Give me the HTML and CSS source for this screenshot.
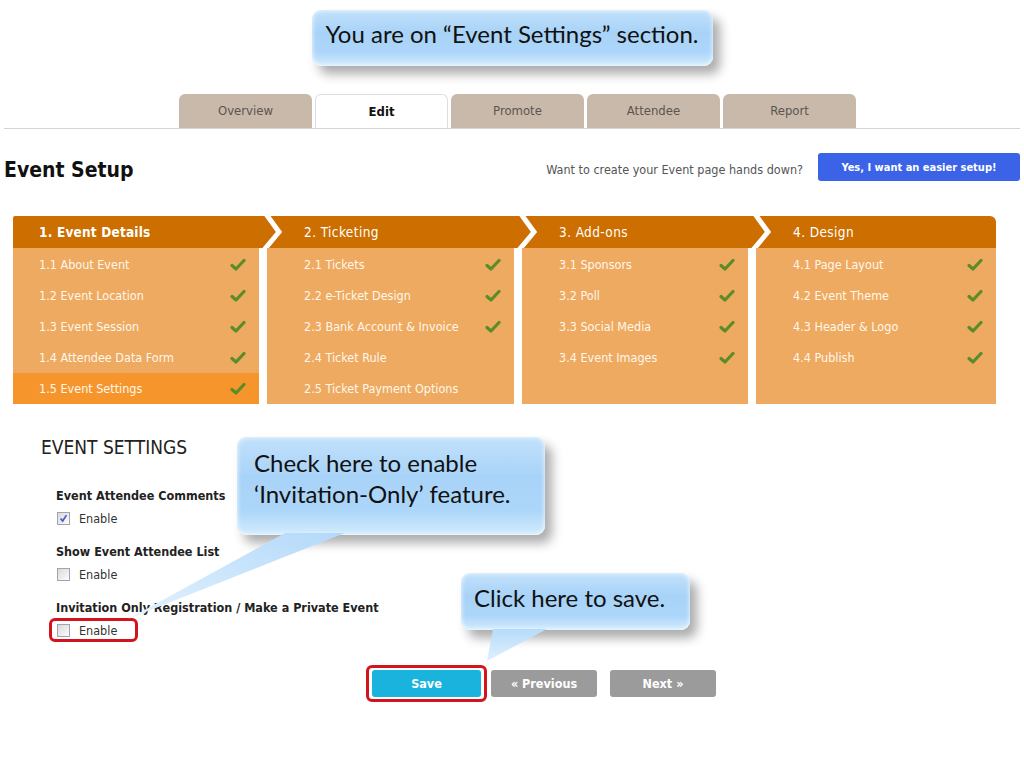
FILE: index.html
```html
<!doctype html>
<html lang="en">
<head>
  <meta charset="utf-8">
  <title>Event Setup - Event Settings</title>
  <link rel="stylesheet" href="styles.css">
</head>
<body>
<div class="slide">
  <div class="note note-top">You are on “Event Settings” section.</div>

  <div class="tabs">
    <div class="tab">Overview</div>
    <div class="tab active">Edit</div>
    <div class="tab">Promote</div>
    <div class="tab">Attendee</div>
    <div class="tab">Report</div>
  </div>

  <div class="setup-head">
    <h1>Event Setup</h1>
    <div class="easy">
      <span>Want to create your Event page hands down?</span>
      <button class="btn-easy">Yes, I want an easier setup!</button>
    </div>
  </div>

  <div class="steps">
    <div class="step">
      <div class="step-head current">1. Event Details</div>
      <ul>
        <li>1.1 About Event <svg class="tick" viewBox="0 0 16 13"><path d="M2 7.5 L6 11 L14 2.5"/></svg></li>
        <li>1.2 Event Location <svg class="tick" viewBox="0 0 16 13"><path d="M2 7.5 L6 11 L14 2.5"/></svg></li>
        <li>1.3 Event Session <svg class="tick" viewBox="0 0 16 13"><path d="M2 7.5 L6 11 L14 2.5"/></svg></li>
        <li>1.4 Attendee Data Form <svg class="tick" viewBox="0 0 16 13"><path d="M2 7.5 L6 11 L14 2.5"/></svg></li>
        <li class="on">1.5 Event Settings <svg class="tick" viewBox="0 0 16 13"><path d="M2 7.5 L6 11 L14 2.5"/></svg></li>
      </ul>
    </div>
    <div class="step">
      <div class="step-head"><svg class="chev" viewBox="0 0 24 32"><polyline points="7,-2 20,16 5,34"/></svg>2. Ticketing</div>
      <ul>
        <li>2.1 Tickets <svg class="tick" viewBox="0 0 16 13"><path d="M2 7.5 L6 11 L14 2.5"/></svg></li>
        <li>2.2 e-Ticket Design <svg class="tick" viewBox="0 0 16 13"><path d="M2 7.5 L6 11 L14 2.5"/></svg></li>
        <li>2.3 Bank Account &amp; Invoice <svg class="tick" viewBox="0 0 16 13"><path d="M2 7.5 L6 11 L14 2.5"/></svg></li>
        <li>2.4 Ticket Rule</li>
        <li>2.5 Ticket Payment Options</li>
      </ul>
    </div>
    <div class="step">
      <div class="step-head"><svg class="chev" viewBox="0 0 24 32"><polyline points="7,-2 20,16 5,34"/></svg>3. Add-ons</div>
      <ul>
        <li>3.1 Sponsors <svg class="tick" viewBox="0 0 16 13"><path d="M2 7.5 L6 11 L14 2.5"/></svg></li>
        <li>3.2 Poll <svg class="tick" viewBox="0 0 16 13"><path d="M2 7.5 L6 11 L14 2.5"/></svg></li>
        <li>3.3 Social Media <svg class="tick" viewBox="0 0 16 13"><path d="M2 7.5 L6 11 L14 2.5"/></svg></li>
        <li>3.4 Event Images <svg class="tick" viewBox="0 0 16 13"><path d="M2 7.5 L6 11 L14 2.5"/></svg></li>
      </ul>
    </div>
    <div class="step">
      <div class="step-head"><svg class="chev" viewBox="0 0 24 32"><polyline points="7,-2 20,16 5,34"/></svg>4. Design</div>
      <ul>
        <li>4.1 Page Layout <svg class="tick" viewBox="0 0 16 13"><path d="M2 7.5 L6 11 L14 2.5"/></svg></li>
        <li>4.2 Event Theme <svg class="tick" viewBox="0 0 16 13"><path d="M2 7.5 L6 11 L14 2.5"/></svg></li>
        <li>4.3 Header &amp; Logo <svg class="tick" viewBox="0 0 16 13"><path d="M2 7.5 L6 11 L14 2.5"/></svg></li>
        <li>4.4 Publish <svg class="tick" viewBox="0 0 16 13"><path d="M2 7.5 L6 11 L14 2.5"/></svg></li>
      </ul>
    </div>
  </div>

  <div class="settings">
    <h2>EVENT SETTINGS</h2>
    <div class="opt">
      <div class="opt-label">Event Attendee Comments</div>
      <div class="opt-row"><span class="box checked"><svg viewBox="0 0 13 13"><path d="M3 6.5 L5.5 9.5 L10 2.5"/></svg></span>Enable</div>
    </div>
    <div class="opt">
      <div class="opt-label">Show Event Attendee List</div>
      <div class="opt-row"><span class="box"></span>Enable</div>
    </div>
    <div class="opt">
      <div class="opt-label">Invitation Only Registration / Make a Private Event</div>
      <div class="opt-row mark"><span class="box"></span>Enable</div>
    </div>
  </div>

  <div class="actions">
    <div class="save-wrap"><button class="btn btn-save">Save</button></div>
    <button class="btn btn-prev">« Previous</button>
    <button class="btn btn-next">Next »</button>
  </div>

  <div class="note note-check">
    <svg class="tail tail-check" viewBox="0 0 220 90">
      <defs>
        <linearGradient id="tg1" x1="1" y1="0" x2="0" y2="1">
          <stop offset="0" stop-color="#b3d9fa"/>
          <stop offset="1" stop-color="#e3f2fe"/>
        </linearGradient>
      </defs>
      <polygon points="157,0 217,0 0,86" fill="url(#tg1)"/>
    </svg>
    Check here to enable<br>‘Invitation-Only’ feature.
  </div>

  <div class="note note-save">
    <svg class="tail tail-save" viewBox="0 0 70 36">
      <defs>
        <linearGradient id="tg2" x1="0" y1="0" x2="0" y2="1">
          <stop offset="0" stop-color="#b6dbfa"/>
          <stop offset="1" stop-color="#e0f1fe"/>
        </linearGradient>
      </defs>
      <polygon points="6,0 60,0 0,32" fill="url(#tg2)"/>
    </svg>
    Click here to save.
  </div>
</div>
</body>
</html>
```

FILE: styles.css
```css
html, body {
  margin: 0;
  padding: 0;
  background: #fff;
}
body {
  font-family: "DejaVu Sans Condensed", "DejaVu Sans", Verdana, sans-serif;
  color: #222;
}
.slide {
  position: relative;
  width: 1024px;
  height: 768px;
  overflow: hidden;
}

/* callouts */
.note {
  font-family: Lato, "Open Sans", sans-serif;
  font-size: 24px;
  color: #111;
  background: linear-gradient(#c2e1fb 0%, #a8d3f8 40%, #acd6f9 75%, #d3ecfd 100%);
  border-radius: 9px;
  box-shadow: 7px 8px 11px rgba(0,0,0,.33), inset 0 0 5px rgba(255,255,255,.95);
  box-sizing: border-box;
}
.note-top {
  width: 401px;
  height: 56px;
  margin: 10px auto 0 auto;
  padding: 9px 0 0 14px;
  line-height: 30px;
}
.note-check {
  position: absolute;
  left: 237px;
  top: 437px;
  width: 308px;
  height: 98px;
  padding: 10px 0 0 17px;
  line-height: 31px;
  z-index: 5;
}
.note-save {
  position: absolute;
  left: 461px;
  top: 573px;
  width: 229px;
  height: 57px;
  padding: 10px 0 0 13px;
  line-height: 30px;
  z-index: 5;
}
.tail {
  position: absolute;
}
.tail-check {
  left: -109px;
  top: 96px;
  width: 220px;
  height: 90px;
}
.tail-save {
  left: 26px;
  top: 56px;
  width: 70px;
  height: 36px;
}

/* tabs */
.tabs {
  display: flex;
  gap: 3px;
  margin: 28px 4px 0 4px;
  padding-left: 175px;
  border-bottom: 1px solid #d4d4d4;
}
.tab {
  box-sizing: border-box;
  width: 133px;
  height: 34px;
  line-height: 34px;
  text-align: center;
  background: #c9b9ab;
  border-radius: 6px 6px 0 0;
  color: #5b5550;
  font-size: 13px;
}
.tab.active {
  background: #fff;
  border: 1px solid #ddd;
  border-bottom: none;
  line-height: 33px;
  color: #111;
  font-weight: bold;
}

/* heading row */
.setup-head {
  display: flex;
  justify-content: space-between;
  align-items: center;
  height: 28px;
  margin: 24px 4px 0 4px;
}
.setup-head h1 {
  margin: 0;
  padding-top: 5px;
  font-size: 21px;
  color: #111;
}
.easy {
  display: flex;
  align-items: center;
}
.easy span {
  padding-top: 5px;
  font-size: 12.5px;
  color: #555;
  margin-right: 15px;
}
.btn-easy {
  width: 202px;
  height: 28px;
  border: none;
  border-radius: 3px;
  background: #3b63e7;
  color: #fff;
  font-family: inherit;
  font-size: 11px;
  font-weight: bold;
}

/* step panel */
.steps {
  display: grid;
  grid-template-columns: 246px 247px 226px 240px;
  column-gap: 8px;
  margin: 35px 0 0 13px;
}
.step {
  display: flex;
  flex-direction: column;
  --pad: 37px;
}
.step:first-child {
  --pad: 26px;
}
.step-head {
  position: relative;
  height: 32px;
  line-height: 32px;
  margin-right: -8px;
  padding-left: var(--pad);
  background: #cc6e00;
  color: #fff;
  font-size: 13.5px;
  letter-spacing: 0.4px;
}
.step-head.current {
  font-weight: bold;
  letter-spacing: 0.2px;
}
.step:first-child .step-head {
  border-radius: 2px 0 0 0;
}
.step:last-child .step-head {
  margin-right: 0;
  border-radius: 0 6px 0 0;
}
.chev {
  position: absolute;
  left: -8px;
  top: 0;
  width: 24px;
  height: 32px;
}
.chev polyline {
  fill: none;
  stroke: #fff;
  stroke-width: 5;
}
.step ul {
  flex: 1;
  list-style: none;
  margin: 0;
  padding: 1px 0 0 0;
  background: #eeaa60;
}
.step li {
  display: flex;
  justify-content: space-between;
  align-items: center;
  height: 31px;
  padding: 0 13px 0 var(--pad);
  color: #fff7ec;
  font-size: 12.5px;
}
.step li.on {
  background: #f7952d;
}
.tick {
  width: 16px;
  height: 13px;
}
.tick path {
  fill: none;
  stroke: #5b8c28;
  stroke-width: 3.2;
  stroke-linecap: round;
  stroke-linejoin: round;
}

/* settings form */
.settings {
  margin: 33px 0 0 41px;
}
.settings h2 {
  margin: 0;
  font-size: 19px;
  line-height: 20px;
  font-weight: normal;
  color: #222;
}
.opt {
  margin: 31px 0 0 15px;
}
.opt + .opt {
  margin-top: 18px;
}
.opt-label {
  font-size: 12.5px;
  line-height: 16px;
  font-weight: bold;
  color: #222;
}
.opt-row {
  display: flex;
  align-items: center;
  height: 16px;
  margin-top: 6px;
  font-size: 12.5px;
  color: #333;
}
.opt-row.mark {
  display: inline-flex;
  border: 3px solid #d3141c;
  border-radius: 6px;
  padding: 1px 18px 1px 4px;
  margin: 2px 0 -4px -7px;
}
.box {
  box-sizing: border-box;
  width: 13px;
  height: 13px;
  margin: 0 9px 0 1px;
  border: 1px solid #a3a3ad;
  background: linear-gradient(135deg, #d9d9d9, #fdfdfd);
}
.box svg {
  display: block;
  width: 11px;
  height: 11px;
}
.box path {
  fill: none;
  stroke: #4a5cc4;
  stroke-width: 2;
}

/* buttons */
.actions {
  display: flex;
  align-items: center;
  margin: 24px 0 0 366px;
}
.save-wrap {
  border: 3px solid #d3141c;
  border-radius: 6px;
  padding: 2px 3px;
}
.btn {
  display: block;
  height: 27px;
  border: none;
  border-radius: 3px;
  color: #fff;
  font-family: inherit;
  font-size: 12.5px;
  font-weight: bold;
}
.btn-save {
  width: 109px;
  background: #19b3de;
}
.btn-prev {
  width: 106px;
  margin-left: 4px;
  background: #9b9b9b;
}
.btn-next {
  width: 106px;
  margin-left: 13px;
  background: #9b9b9b;
}
```
